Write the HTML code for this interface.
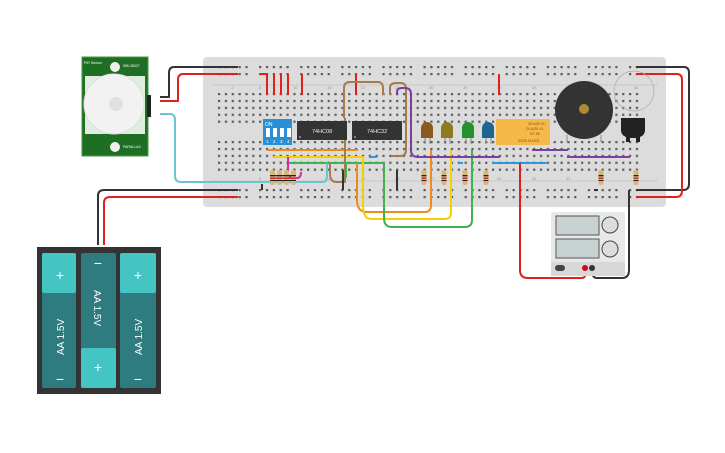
<!DOCTYPE html>
<html><head><meta charset="utf-8"><style>
html,body{margin:0;padding:0;background:#fff;width:725px;height:453px;overflow:hidden}
svg{display:block}
text{font-family:"Liberation Sans",sans-serif}
</style></head><body>
<svg width="725" height="453" viewBox="0 0 725 453" xmlns="http://www.w3.org/2000/svg">
<defs>
<pattern id="h" patternUnits="userSpaceOnUse" x="218" y="93" width="6.85" height="6.9"><rect x="0" y="0" width="2.2" height="2.2" fill="#5a5a5a"/></pattern>
<pattern id="r" patternUnits="userSpaceOnUse" x="218" y="66" width="41.1" height="7"><rect x="0" y="0" width="2.2" height="2.2" fill="#5a5a5a"/><rect x="6.85" y="0" width="2.2" height="2.2" fill="#5a5a5a"/><rect x="13.7" y="0" width="2.2" height="2.2" fill="#5a5a5a"/><rect x="20.55" y="0" width="2.2" height="2.2" fill="#5a5a5a"/><rect x="27.4" y="0" width="2.2" height="2.2" fill="#5a5a5a"/></pattern>
<pattern id="r2" patternUnits="userSpaceOnUse" x="218" y="189" width="41.1" height="7"><rect x="0" y="0" width="2.2" height="2.2" fill="#5a5a5a"/><rect x="6.85" y="0" width="2.2" height="2.2" fill="#5a5a5a"/><rect x="13.7" y="0" width="2.2" height="2.2" fill="#5a5a5a"/><rect x="20.55" y="0" width="2.2" height="2.2" fill="#5a5a5a"/><rect x="27.4" y="0" width="2.2" height="2.2" fill="#5a5a5a"/></pattern>
<pattern id="h2" patternUnits="userSpaceOnUse" x="218" y="141" width="6.85" height="6.9"><rect x="0" y="0" width="2.2" height="2.2" fill="#5a5a5a"/></pattern>
<g id="rs"><rect x="-2.5" y="0" width="5" height="15" rx="2" fill="#d7b67a"/><rect x="-2.5" y="5" width="5" height="1.3" fill="#222"/><rect x="-2.5" y="7.5" width="5" height="1.3" fill="#d11"/><rect x="-2.5" y="10" width="5" height="1" fill="#222"/></g>
</defs>
<!-- breadboard -->
<rect x="203" y="57" width="463" height="150" rx="4" fill="#dcdcdc"/>
<line x1="212" y1="85" x2="658" y2="85" stroke="#c9c9c9"/>
<line x1="212" y1="181" x2="658" y2="181" stroke="#c9c9c9"/>
<rect x="218" y="66" width="420" height="10" fill="url(#r)"/>
<rect x="218" y="189" width="420" height="10" fill="url(#r2)"/>
<rect x="218" y="93" width="424" height="33" fill="url(#h)"/>
<rect x="218" y="141" width="424" height="33" fill="url(#h2)"/>
<g font-size="4" fill="#999"><text x="231" y="89">1</text><text x="259" y="89">5</text><text x="293" y="89">10</text><text x="327" y="89">15</text><text x="361" y="89">20</text><text x="395" y="89">25</text><text x="429" y="89">30</text><text x="463" y="89">35</text><text x="497" y="89">40</text><text x="532" y="89">45</text><text x="566" y="89">50</text><text x="634" y="89">60</text>
<text x="259" y="180">5</text><text x="327" y="180">15</text><text x="361" y="180">20</text><text x="395" y="180">25</text><text x="429" y="180">30</text><text x="497" y="180">40</text><text x="532" y="180">45</text><text x="566" y="180">50</text></g>
<!-- red jumpers top -->
<g stroke="#e0201c" stroke-width="2" fill="none">
<path d="M260 74 H267 V95"/><path d="M274 74 V95"/><path d="M281 74 V95"/><path d="M288 74 V95"/><path d="M302 74 V95"/><path d="M356 74 V95"/><path d="M499 74 V95"/>
</g>
<!-- wires -->
<g fill="none" stroke-width="2" stroke-linejoin="round">
<path d="M267 150 H358" stroke="#f08a1a"/>
<path d="M273 157 H364" stroke="#f5d000"/>
<path d="M289 163 H384" stroke="#3cb44b"/>
<path d="M288 157 V173 Q288 178 294 178 H297 Q301 178 301 172" stroke="#d0309a"/>
<path d="M346 163 V178" stroke="#3cb44b"/>
<path d="M357 163 V200 Q357 212 367 212 H425 Q431 212 431 205 V150" stroke="#f08a1a"/>
<path d="M363 157 V205 Q363 219 371 219 H445 Q451 219 451 212 V150" stroke="#f5d000"/>
<path d="M384 163 V218 Q384 227 392 227 H465 Q472 227 472 220 V150" stroke="#3cb44b"/>
<path d="M344 118 V88 Q344 82 350 82 H378 Q383 82 383 88 V95" stroke="#a87a4a"/>
<path d="M345 118 V182 H337 Q330 182 330 174 V163" stroke="#a87a4a"/>
<path d="M390 95 V88 Q390 83 396 83 H401 Q406 83 406 89 V150 Q406 156 400 156 H391" stroke="#a87a4a"/>
<path d="M397 95 V92 Q397 88 402 88 H405 Q411 88 411 94 V150 Q411 157 418 157 H500" stroke="#7b3fa0"/>
<path d="M532 150 H568" stroke="#7b3fa0"/><path d="M567 157 H630" stroke="#7b3fa0"/>
<path d="M492 163 H548" stroke="#2a9ad6"/><path d="M369 157 H377" stroke="#2a9ad6"/><path d="M458 163 H463" stroke="#2a9ad6"/>
<path d="M397 170 V190" stroke="#333"/><path d="M343 170 V190" stroke="#333"/><path d="M262 190 V184" stroke="#333"/>
<path d="M520 163 V270 Q520 278 528 278 H582 Q586 278 586 270" stroke="#e0201c"/>
<path d="M629 190 V270 Q629 278 622 278 H597 Q592 278 592 270" stroke="#333"/>
<path d="M598 190 H594" stroke="#333"/>
<path d="M636 67 H684 Q689 67 689 73 V184 Q689 190 683 190 H636" stroke="#333"/>
<path d="M636 74 H677 Q682 74 682 80 V191 Q682 197 676 197 H636" stroke="#e0201c"/>
<path d="M238 67 H174 Q169 67 169 73 V97 H160" stroke="#333"/>
<path d="M238 74 H183 Q178 74 178 80 V101 H160" stroke="#e0201c"/>
<path d="M160 114 H170 Q175 114 175 120 V176 Q175 182 181 182 H322 Q327 182 327 176 V163" stroke="#6cc3d5"/>
<path d="M238 190 H104 Q98 190 98 196 V245" stroke="#333"/>
<path d="M238 197 H110 Q104 197 104 203 V245" stroke="#e0201c"/>
</g>
<!-- resistors -->
<g>
<rect x="270" y="170" width="5" height="15" rx="2" fill="#d7b67a"/><rect x="277" y="170" width="5" height="15" rx="2" fill="#d7b67a"/><rect x="284" y="170" width="5" height="15" rx="2" fill="#d7b67a"/><rect x="291" y="170" width="5" height="15" rx="2" fill="#d7b67a"/>
<rect x="270" y="175" width="26" height="1.3" fill="#222"/><rect x="270" y="177.5" width="26" height="1.3" fill="#d11"/><rect x="270" y="180" width="26" height="1" fill="#222"/>
<use href="#rs" x="424" y="170"/><use href="#rs" x="444" y="170"/><use href="#rs" x="465" y="170"/><use href="#rs" x="486" y="170"/><use href="#rs" x="601" y="170"/><use href="#rs" x="636" y="170"/>
</g>
<!-- DIP switch -->
<rect x="263" y="119" width="29" height="26" fill="#2a8fd6"/>
<text x="265" y="126" font-size="5" fill="#fff">ON</text>
<g fill="#fff"><rect x="266" y="128" width="4" height="9"/><rect x="273" y="128" width="4" height="9"/><rect x="280" y="128" width="4" height="9"/><rect x="287" y="128" width="4" height="9"/></g>
<g font-size="4.5" fill="#fff"><text x="266" y="143">1</text><text x="273" y="143">2</text><text x="280" y="143">3</text><text x="287" y="143">4</text></g>
<!-- ICs -->
<rect x="297" y="121" width="50" height="19" fill="#333"/><text x="312" y="133" font-size="5.5" fill="#eee">74HC08</text>
<rect x="352" y="121" width="50" height="19" fill="#333"/><text x="367" y="133" font-size="5.5" fill="#eee">74HC32</text>
<circle cx="300" cy="137" r="0.8" fill="#ddd"/><circle cx="355" cy="137" r="0.8" fill="#ddd"/>
<!-- LEDs -->
<g><path d="M421 138 V128 a6 6 0 0 1 12 0 V138 Z" fill="#8a5a1e"/><path d="M441 138 V128 a6 6 0 0 1 12 0 V138 Z" fill="#8e7a20"/><path d="M462 138 V128 a6 6 0 0 1 12 0 V138 Z" fill="#21922c"/><path d="M482 138 V128 a6 6 0 0 1 12 0 V138 Z" fill="#1e6590"/></g>
<g stroke="#888" stroke-width="1"><path d="M425 138 V144 M430 138 V144 M445 138 V144 M450 138 V144 M466 138 V144 M471 138 V144 M486 138 V144 M491 138 V144"/></g>
<!-- relay -->
<rect x="496" y="119" width="54" height="26" rx="1" fill="#f7b84a"/>
<g font-size="3.5" fill="#7a4a10"><text x="528" y="125">25 A/20 VC</text><text x="526" y="130">2V A/25 VL</text><text x="530" y="135">VC 5V</text><text x="518" y="142">KS2E-M-DC5</text></g>
<!-- buzzer -->
<circle cx="584" cy="110" r="29" fill="#333"/><circle cx="584" cy="109" r="5" fill="#b08a30"/>
<path d="M567 135 V142 M601 135 V142" stroke="#888"/>
<!-- bulb -->
<circle cx="634" cy="91" r="20" fill="none" stroke="#aaa" stroke-width="0.7"/>
<path d="M621 118 H645 V130 Q645 138 633 138 Q621 138 621 130 Z" fill="#222"/>
<rect x="626" y="136" width="4" height="6" fill="#222"/><rect x="636" y="136" width="4" height="6" fill="#222"/>
<!-- power supply -->
<rect x="551" y="212" width="74" height="64" rx="2" fill="#e8e8e8"/>
<rect x="556" y="216" width="43" height="19" fill="#c9d2d3" stroke="#555" stroke-width="1"/>
<rect x="556" y="239" width="43" height="19" fill="#c9d2d3" stroke="#555" stroke-width="1"/>
<circle cx="610" cy="225" r="8" fill="#ddd" stroke="#444"/><circle cx="610" cy="249" r="8" fill="#ddd" stroke="#444"/>
<rect x="551" y="262" width="74" height="14" fill="#d8d8d8"/>
<rect x="555" y="265" width="10" height="6" rx="3" fill="#444"/>
<circle cx="585" cy="268" r="3" fill="#c0101a"/><circle cx="592" cy="268" r="3" fill="#333"/>
<!-- PIR -->
<rect x="82" y="57" width="66" height="99" fill="#1e6e24" stroke="#4a9a4a"/>
<rect x="85" y="76" width="60" height="58" fill="#dfeee0"/>
<circle cx="114" cy="104" r="30" fill="#f2f2f2" stroke="#ddd"/><circle cx="116" cy="104" r="7" fill="#e0e0e0"/>
<circle cx="115" cy="67" r="5" fill="#eee"/><circle cx="115" cy="147" r="5" fill="#eee"/>
<text x="84" y="64" font-size="3.5" fill="#fff">PIR Sensor</text><text x="123" y="67" font-size="3.5" fill="#fff">555-28027</text><text x="123" y="148" font-size="3.5" fill="#fff">PARALLAX</text>
<rect x="147" y="95" width="4" height="22" fill="#222"/>
<!-- battery -->
<rect x="37" y="247" width="124" height="147" fill="#333"/>
<rect x="42" y="253" width="34" height="135" rx="2" fill="#2e7c7f"/><rect x="42" y="253" width="34" height="40" rx="2" fill="#45c4c4"/>
<rect x="81" y="253" width="35" height="135" rx="2" fill="#2e7c7f"/><rect x="81" y="348" width="35" height="40" rx="2" fill="#45c4c4"/>
<rect x="120" y="253" width="36" height="135" rx="2" fill="#2e7c7f"/><rect x="120" y="253" width="36" height="40" rx="2" fill="#45c4c4"/>
<g fill="#fff" font-size="14" text-anchor="middle"><text x="60" y="280">+</text><text x="98" y="372">+</text><text x="138" y="280">+</text><text x="60" y="384">−</text><text x="98" y="268">−</text><text x="138" y="384">−</text></g>
<g fill="#fff" font-size="10"><text transform="translate(64,355) rotate(-90)">AA 1.5V</text><text transform="translate(94,290) rotate(90)">AA 1.5V</text><text transform="translate(142,355) rotate(-90)">AA 1.5V</text></g>
</svg>
</body></html>
